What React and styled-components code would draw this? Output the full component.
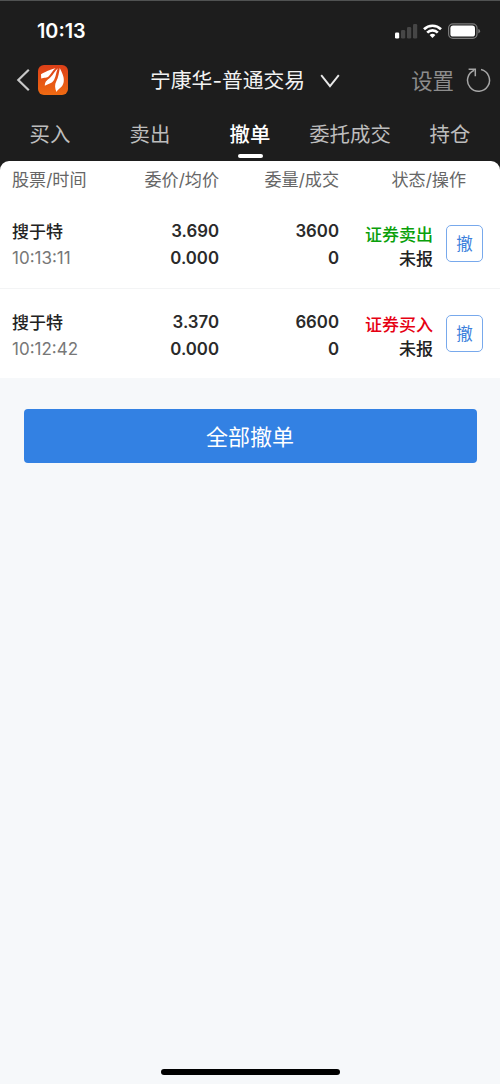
import styled, { createGlobalStyle } from "styled-components";

const GlobalStyle = createGlobalStyle`
  * {
    box-sizing: border-box;
  }
  body {
    margin: 0;
    background: #f6f8fa;
    font-family: Inter, "Noto Sans CJK SC", sans-serif;
  }
`

const Container = styled.div`
  height: 1084px;
  display: flex;
  flex-direction: column;
  overflow: hidden;
`

const Header = styled.header`
  height: 161px;
  background: #1d1d1d;
  border-top: 1px solid #505252;
`

const StatusBar = styled.div`
  display: flex;
  justify-content: space-between;
  align-items: center;
  height: 59px;
  padding: 0 19px 0 37px;
`

const Clock = styled.span`
  font-size: 19.8px;
  font-weight: 600;
  line-height: 24px;
  color: #fff;
`

const NavBar = styled.div`
  display: flex;
  align-items: center;
  height: 40px;
  padding: 0 9px 0 16px;
`

const NavStart = styled.div`
  width: 134px;
  display: flex;
  align-items: center;
  gap: 8px;
`

const NavEnd = styled.div`
  flex: 1;
  display: flex;
  align-items: center;
  justify-content: flex-end;
  gap: 12px;
`

const Account = styled.div`
  display: flex;
  align-items: center;
  gap: 15px;
  padding-top: 1px;
  font-size: 20.8px;
  line-height: 30px;
  color: #f2f2f2;
  white-space: nowrap;
`

const Setting = styled.span`
  padding-top: 1px;
  font-size: 21.4px;
  line-height: 30px;
  color: #8c8c8c;
`

const Tabs = styled.nav`
  display: grid;
  grid-template-columns: repeat(5, 1fr);
  height: 61px;
  padding-top: 19px;
`

const Tab = styled.div`
  display: flex;
  flex-direction: column;
  align-items: center;
  font-size: 20.4px;
  line-height: 32px;
  white-space: nowrap;
  font-weight: ${(props) => (props.$active ? 500 : 400)};
  color: ${(props) => (props.$active ? "#fff" : "#bdbdbd")};

  &::after {
    content: "";
    width: 25px;
    height: 4px;
    margin-top: 3px;
    border-radius: 2px;
    background: ${(props) => (props.$active ? "#fff" : "transparent")};
  }
`

const PanelBack = styled.div`
  background: #1d1d1d;
`

const Panel = styled.div`
  height: 217px;
  background: #fff;
  border-radius: 9px 9px 0 0;
`

const Row = styled.div`
  display: grid;
  grid-template-columns: 107px 100px 120px 94px 50px;
  align-items: center;
  padding: 0 12px;
`

const TitleRow = styled(Row)`
  grid-template-columns: 107px 100px 120px 127px;
  height: 37px;
  font-size: 17.1px;
  line-height: 24px;
  color: #666;
`

const OrderRow = styled(Row)`
  height: 90px;
  border-top: ${(props) => (props.$line ? "1px solid #f3f4f5" : "none")};
`

const Cell = styled.div`
  display: flex;
  flex-direction: column;
  align-items: ${(props) => (props.$left ? "flex-start" : "flex-end")};
  white-space: nowrap;
`

const TextCell = styled(Cell)`
  padding-top: 4px;
`

const Name = styled.span`
  padding-top: 1px;
  font-size: 17px;
  font-weight: 500;
  line-height: 26px;
  color: #222;
`

const Time = styled.span`
  font-size: 17px;
  line-height: 27px;
  color: #777;
`

const Num = styled.span`
  font-size: 16.8px;
  font-weight: 600;
  line-height: 27px;
  color: #2a2a2a;
`

const Side = styled.span`
  font-size: 17px;
  font-weight: 500;
  line-height: 24px;
  padding-top: 4px;
  color: ${(props) => (props.$sell ? "#0aa00a" : "#e60012")};
`

const Status = styled.span`
  font-size: 17px;
  font-weight: 500;
  line-height: 25px;
  color: #222;
`

const CancelButton = styled.button`
  width: 37px;
  height: 37px;
  padding: 0 0 1px;
  border: 1px solid #78a9ec;
  border-radius: 5px;
  background: #fff;
  font: inherit;
  font-size: 16.5px;
  color: #3c80dc;
`

const CancelAll = styled.button`
  height: 54px;
  margin: 31px 23.5px 0;
  padding: 0 0 3px;
  border: none;
  border-radius: 4px;
  background: #3381e3;
  font: inherit;
  font-size: 22px;
  color: #fff;
`

const HomeBar = styled.div`
  width: 179px;
  height: 6px;
  margin: auto auto 9px;
  border-radius: 3px;
  background: #000;
`

const tabs = ["买入", "卖出", "撤单", "委托成交", "持仓"]

const orders = [
  { name: "搜于特", time: "10:13:11", price: "3.690", avg: "0.000", amount: "3600", done: "0", side: "证券卖出", sell: true, status: "未报" },
  { name: "搜于特", time: "10:12:42", price: "3.370", avg: "0.000", amount: "6600", done: "0", side: "证券买入", sell: false, status: "未报" },
]

const StatusIcons = () => (
  <svg width="86" height="18" viewBox="395 21 86 18">
    <rect x="395" y="31.5" width="4.2" height="6" rx="1.2" fill="#fff" />
    <rect x="401" y="29" width="4.2" height="8.5" rx="1.2" fill="#464646" />
    <rect x="407" y="26" width="4.2" height="11.5" rx="1.2" fill="#464646" />
    <rect x="413" y="23" width="4.2" height="14.5" rx="1.2" fill="#464646" />
    <g fill="none" stroke="#fff" strokeWidth="2.7">
      <path d="M424 28.2a12.2 12.2 0 0 1 17 0" />
      <path d="M427.2 31.6a7.6 7.6 0 0 1 10.6 0" />
    </g>
    <path d="M429.6 34.1a4.2 4.2 0 0 1 5.8 0L432.5 37z" fill="#fff" />
    <rect x="448.6" y="22.8" width="28.4" height="14.6" rx="4.3" fill="none" stroke="#7b7b7b" strokeWidth="1.2" />
    <rect x="450.4" y="24.6" width="24.6" height="11" rx="2.7" fill="#fff" />
    <path d="M478.3 28q1.8.6 1.8 2.2t-1.8 2.2z" fill="#7b7b7b" />
  </svg>
)

const BackIcon = () => (
  <svg width="14" height="24" viewBox="0 0 14 24" fill="none" stroke="#c8c8c8" strokeWidth="2.2">
    <path d="M12.8 1.8L2.3 12l10.5 10.2" />
  </svg>
)

const Logo = () => (
  <svg width="30" height="30" viewBox="0 0 30 30">
    <defs>
      <linearGradient id="logo" x1="0" y1="0" x2="0" y2="1">
        <stop offset="0" stopColor="#dc3f18" />
        <stop offset="1" stopColor="#ef6a12" />
      </linearGradient>
    </defs>
    <rect width="30" height="30" rx="6" fill="url(#logo)" />
    <g fill="#fff">
      <path d="M17.5 3.2C12 4.500 6 7.500 3 9.200L3.200 13.500C6 12.500 9 13.200 11 11C13.500 8.300 14.500 5.500 17.500 3.200Z" />
      <path d="M20 3.200C17 5.500 15.500 9.500 12.500 12.300C10 14.800 6.800 16 6.800 20.800C9.500 19 13 19 15.300 16C18 12.500 18 7 20 3.200Z" />
      <path d="M21.800 3C20.800 8 20.500 12.500 18.300 16.300C16.500 19.500 16.800 23.500 18.500 27C20.200 23.500 24.800 22.500 25.700 17C26.600 11.500 23.500 7 21.800 3Z" />
    </g>
  </svg>
)

const DownIcon = () => (
  <svg width="20" height="14" viewBox="0 0 20 14" fill="none" stroke="#e8e8e8" strokeWidth="1.9">
    <path d="M1.2 1.2L10 12.2L18.8 1.2" />
  </svg>
)

const RefreshIcon = () => (
  <svg width="25" height="26" viewBox="0 0 25 26" fill="none" stroke="#a6a6a6" strokeWidth="1.5">
    <path d="M15 2.6A11 11 0 1 1 8.2 3.2" />
    <path d="M2.6 2.2H9.3V9.2" />
  </svg>
)

const App = () => {
  return <Container>
    <GlobalStyle />
    <Header>
      <StatusBar>
        <Clock>10:13</Clock>
        <StatusIcons />
      </StatusBar>
      <NavBar>
        <NavStart>
          <BackIcon />
          <Logo />
        </NavStart>
        <Account>宁康华-普通交易 <DownIcon /></Account>
        <NavEnd>
          <Setting>设置</Setting>
          <RefreshIcon />
        </NavEnd>
      </NavBar>
      <Tabs>
        {tabs.map((tab) => (
          <Tab key={tab} $active={tab === "撤单"}>{tab}</Tab>
        ))}
      </Tabs>
    </Header>

    <PanelBack>
      <Panel>
        <TitleRow>
          <Cell $left>股票/时间</Cell>
          <Cell>委价/均价</Cell>
          <Cell>委量/成交</Cell>
          <Cell>状态/操作</Cell>
        </TitleRow>
        {orders.map((order, i) => (
          <OrderRow key={order.time} $line={i > 0}>
            <TextCell $left>
              <Name>{order.name}</Name>
              <Time>{order.time}</Time>
            </TextCell>
            <TextCell>
              <Num>{order.price}</Num>
              <Num>{order.avg}</Num>
            </TextCell>
            <TextCell>
              <Num>{order.amount}</Num>
              <Num>{order.done}</Num>
            </TextCell>
            <TextCell>
              <Side $sell={order.sell}>{order.side}</Side>
              <Status>{order.status}</Status>
            </TextCell>
            <Cell>
              <CancelButton>撤</CancelButton>
            </Cell>
          </OrderRow>
        ))}
      </Panel>
    </PanelBack>

    <CancelAll>全部撤单</CancelAll>
    <HomeBar />
  </Container>;
};

export default App;
